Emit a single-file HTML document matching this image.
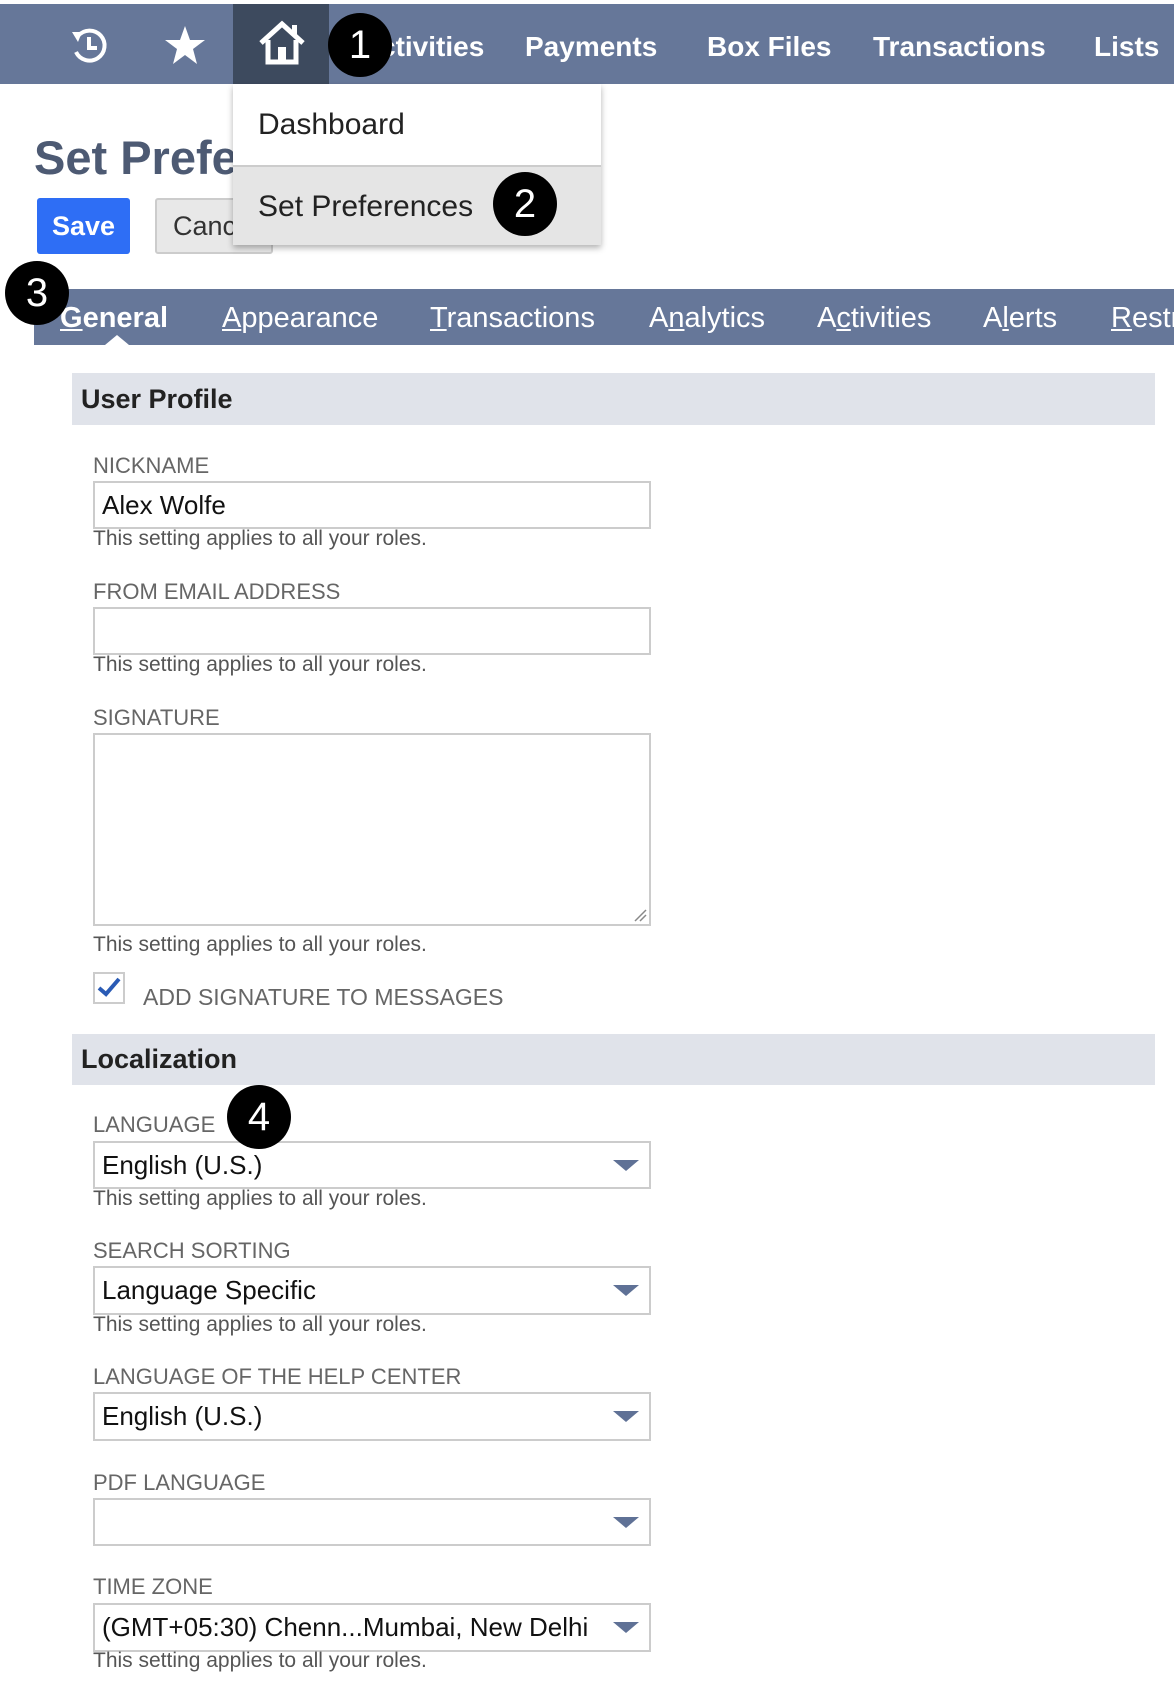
<!DOCTYPE html>
<html><head><meta charset="utf-8"><style>
*{margin:0;padding:0;box-sizing:border-box}
body{width:1174px;height:1688px;background:#fff;position:relative;overflow:hidden;font-family:"Liberation Sans",sans-serif}
.a{position:absolute;white-space:nowrap}
.nav{left:0;top:4px;width:1174px;height:80px;background:#667799}
.nt{color:#fff;font-size:28px;top:31px;font-weight:bold}
.badge{position:absolute;width:64px;height:64px;border-radius:50%;background:#000;color:#fff;font-size:40px;text-align:center;line-height:64px}
.tab{color:#fff;font-size:29px;top:302px}
.tab u{text-decoration:underline}
.sec{left:72px;width:1083px;background:#e0e3ea;font-weight:bold;font-size:27px;color:#222;padding-left:9px}
.lbl{left:93px;font-size:22px;color:#666}
.inp{left:93px;width:558px;border:2px solid #ccc;background:#fff;font-size:26px;color:#111;padding-left:7px}
.hlp{left:93px;font-size:21px;color:#555}
.arr{position:absolute;right:10px;top:17px;width:0;height:0;border-left:13px solid transparent;border-right:13px solid transparent;border-top:11px solid #5f7196}
</style></head><body>
<div class="a nav"></div>
<div class="a" style="left:233px;top:4px;width:96px;height:80px;background:#3d4a5e"></div>
<svg class="a" style="left:68px;top:24px" width="42" height="42" viewBox="0 0 42 42"><path d="M10 12 A15 15 0 1 1 8 28" fill="none" stroke="#fff" stroke-width="4"/><path d="M4 8 L14 8 L10 18 Z" fill="#fff"/><path d="M21 13 V24 H29" fill="none" stroke="#fff" stroke-width="4"/></svg>
<svg class="a" style="left:164px;top:24px" width="42" height="42" viewBox="0 0 42 42"><path d="M21 2 L26 16 L41 16 L29 25 L33 40 L21 31 L9 40 L13 25 L1 16 L16 16 Z" fill="#fff"/></svg>
<svg class="a" style="left:258px;top:20px" width="48" height="46" viewBox="0 0 48 46"><path d="M3 23 L24 4 L45 23" fill="none" stroke="#fff" stroke-width="5"/><path d="M10 20 V42 H38 V20" fill="none" stroke="#fff" stroke-width="5"/><rect x="20" y="27" width="8" height="14" fill="#fff"/><rect x="34" y="5" width="5" height="10" fill="#fff"/></svg>
<div class="a nt" style="left:380px">ctivities</div>
<div class="a nt" style="left:525px">Payments</div>
<div class="a nt" style="left:707px">Box Files</div>
<div class="a nt" style="left:873px">Transactions</div>
<div class="a nt" style="left:1094px">Lists</div>
<div class="badge" style="left:328px;top:13px">1</div>

<div class="a" style="left:34px;top:130px;font-size:47px;font-weight:bold;color:#4d5a73">Set Prefe</div>
<div class="a" style="left:37px;top:198px;width:93px;height:56px;background:#2e6ef5;border-radius:3px;color:#fff;font-size:27px;font-weight:bold;text-align:center;line-height:56px">Save</div>
<div class="a" style="left:155px;top:198px;width:118px;height:56px;background:#e8e8e8;border:2px solid #ccc;border-radius:3px;color:#333;font-size:27px;padding-left:16px;line-height:52px">Cancel</div>

<div class="a" style="left:233px;top:84px;width:368px;height:161px;background:#fff;box-shadow:0 3px 6px rgba(0,0,0,.3)"></div>
<div class="a" style="left:233px;top:165px;width:368px;height:80px;background:#e5e5e5;border-top:2px solid #ccc"></div>
<div class="a" style="left:258px;top:108px;font-size:30px;color:#222">Dashboard</div>
<div class="a" style="left:258px;top:190px;font-size:30px;color:#222">Set Preferences</div>
<div class="badge" style="left:493px;top:172px">2</div>

<div class="a" style="left:34px;top:289px;width:1140px;height:56px;background:#667799"></div>
<div class="a" style="left:105px;top:335px;width:0;height:0;border-left:12px solid transparent;border-right:12px solid transparent;border-bottom:10px solid #fff"></div>
<div class="a tab" style="left:60px;font-weight:bold"><u>G</u>eneral</div>
<div class="a tab" style="left:222px"><u>A</u>ppearance</div>
<div class="a tab" style="left:430px"><u>T</u>ransactions</div>
<div class="a tab" style="left:649px">A<u>n</u>alytics</div>
<div class="a tab" style="left:817px">A<u>c</u>tivities</div>
<div class="a tab" style="left:983px">A<u>l</u>erts</div>
<div class="a tab" style="left:1111px"><u>R</u>estr</div>
<div class="badge" style="left:5px;top:261px">3</div>

<div class="a sec" style="top:373px;height:52px;line-height:52px">User Profile</div>
<div class="a lbl" style="top:453px">NICKNAME</div>
<div class="a inp" style="top:481px;height:48px;line-height:44px">Alex Wolfe</div>
<div class="a hlp" style="top:527px">This setting applies to all your roles.</div>
<div class="a lbl" style="top:579px">FROM EMAIL ADDRESS</div>
<div class="a inp" style="top:607px;height:48px"></div>
<div class="a hlp" style="top:653px">This setting applies to all your roles.</div>
<div class="a lbl" style="top:705px">SIGNATURE</div>
<div class="a inp" style="top:733px;height:193px"></div>
<svg class="a" style="left:633px;top:908px" width="14" height="14"><path d="M2 13 L13 2 M7 13 L13 7" stroke="#888" stroke-width="1.5"/></svg>
<div class="a hlp" style="top:933px">This setting applies to all your roles.</div>
<div class="a" style="left:93px;top:972px;width:32px;height:32px;border:2px solid #ccc;background:#fff"></div>
<svg class="a" style="left:96px;top:976px" width="26" height="22"><path d="M3 12 L10 18 L23 3" fill="none" stroke="#2a5bb5" stroke-width="4"/></svg>
<div class="a lbl" style="left:143px;top:984px;font-size:23px">ADD SIGNATURE TO MESSAGES</div>

<div class="a sec" style="top:1034px;height:51px;line-height:51px">Localization</div>
<div class="a lbl" style="top:1112px">LANGUAGE</div>
<div class="a inp" style="top:1141px;height:48px;line-height:44px">English (U.S.)<div class="arr"></div></div>
<div class="a hlp" style="top:1187px">This setting applies to all your roles.</div>
<div class="badge" style="left:227px;top:1085px">4</div>
<div class="a lbl" style="top:1238px">SEARCH SORTING</div>
<div class="a inp" style="top:1266px;height:49px;line-height:45px">Language Specific<div class="arr"></div></div>
<div class="a hlp" style="top:1313px">This setting applies to all your roles.</div>
<div class="a lbl" style="top:1364px">LANGUAGE OF THE HELP CENTER</div>
<div class="a inp" style="top:1392px;height:49px;line-height:45px">English (U.S.)<div class="arr"></div></div>
<div class="a lbl" style="top:1470px">PDF LANGUAGE</div>
<div class="a inp" style="top:1498px;height:48px"><div class="arr"></div></div>
<div class="a lbl" style="top:1574px">TIME ZONE</div>
<div class="a inp" style="top:1603px;height:49px;line-height:45px">(GMT+05:30) Chenn...Mumbai, New Delhi<div class="arr"></div></div>
<div class="a hlp" style="top:1649px">This setting applies to all your roles.</div>
</body></html>
